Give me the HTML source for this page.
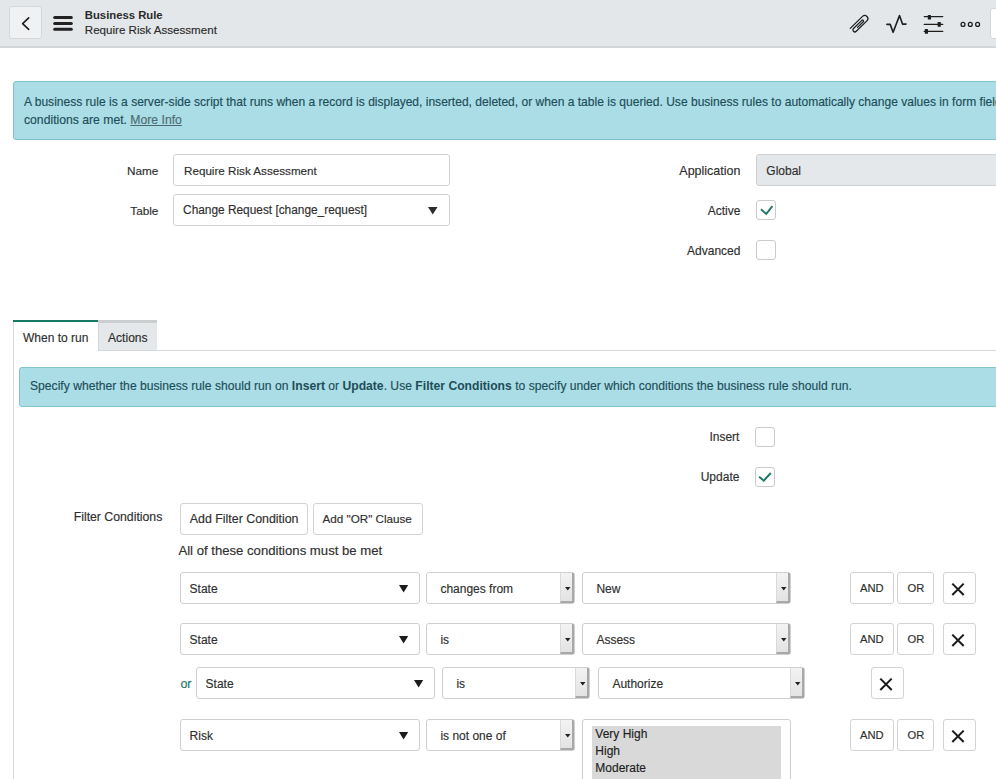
<!DOCTYPE html>
<html><head><meta charset="utf-8">
<style>
*{box-sizing:border-box;margin:0;padding:0}
html,body{width:996px;height:779px;overflow:hidden;background:#fff;font-family:"Liberation Sans",sans-serif;color:#2e2e2e}
body{position:relative}
.abs{position:absolute}
#hdr{position:absolute;left:0;top:0;width:996px;height:48px;background:#e4e7ea;border-bottom:2px solid #d3d6d9}
#back{position:absolute;left:9px;top:6px;width:33px;height:33px;border:1px solid #d5d8db;border-radius:3px;background:#eff1f3}
.t{position:absolute;white-space:nowrap;line-height:1;-webkit-text-stroke:0.15px currentColor}
b{-webkit-text-stroke:0}
.info{position:absolute;background:#aadde6;border:1px solid #7fc3cf;border-radius:3px}
.inp{position:absolute;height:32px;border:1px solid #cfd2d4;border-radius:3px;background:#fff}
.cb{position:absolute;width:20px;height:20px;border:1px solid #cbcbcb;border-radius:3px;background:#fff}
.btn{position:absolute;height:32px;border:1px solid #d3d3d3;border-radius:3px;background:#fff}
.sel{position:absolute;height:32px;border:1px solid #cfcfcf;border-radius:3px;background:#fff}
.dd{position:absolute;right:0;top:0;width:14px;height:30px;background:linear-gradient(#f3f3f3,#e3e3e3);border-left:1px solid #dadada;border-right:2px solid #a8a8a8;border-bottom:2px solid #a8a8a8}
</style></head><body>
<div id="hdr"></div>
<div id="back"></div>
<svg class="abs" style="left:0;top:0" width="996" height="46">
<path d="M28.7 17.8 L22.6 23.6 L28.7 29.4" fill="none" stroke="#1e1e1e" stroke-width="1.6" stroke-linecap="round" stroke-linejoin="round"/>
<rect x="53.2" y="15.9" width="19.6" height="3" rx="1.5" fill="#222"/>
<rect x="53.2" y="22.1" width="19.6" height="3" rx="1.5" fill="#222"/>
<rect x="53.2" y="27.8" width="19.6" height="3" rx="1.5" fill="#222"/>
</svg>
<div class="t" style="top:9.73px;font-size:11.3px;left:84.80px;color:#2b2b2b;font-weight:bold;-webkit-text-stroke:0;">Business Rule</div>
<div class="t" style="top:23.58px;font-size:11.6px;left:84.80px;color:#2b2b2b;">Require Risk Assessment</div>
<div class="info" style="left:13px;top:81px;width:1000px;height:59px"></div>
<div class="t" style="top:96.09px;font-size:12.06px;left:24.00px;color:#1e4d58;">A business rule is a server-side script that runs when a record is displayed, inserted, deleted, or when a table is queried. Use business rules to automatically change values in form fields when specified</div>
<div class="t" style="top:113.87px;font-size:12.2px;left:24.00px;color:#1e4d58;">conditions are met. <span style="color:#4f6b72;text-decoration:underline">More Info</span></div>
<div class="t" style="top:164.94px;font-size:11.77px;right:837.60px;">Name</div>
<div class="inp" style="left:173px;top:154px;width:277px"></div>
<div class="t" style="top:165.02px;font-size:11.67px;left:184.00px;">Require Risk Assessment</div>
<div class="t" style="top:204.94px;font-size:11.77px;right:837.60px;">Table</div>
<div class="inp" style="left:173px;top:194px;width:277px"></div>
<div class="t" style="top:204.86px;font-size:11.86px;left:183.10px;">Change Request [change_request]</div>
<svg class="abs" style="left:428px;top:207px" width="10" height="8"><path d="M0 0 H9.5 L4.75 7.5 Z" fill="#2b2b2b"/></svg>
<div class="t" style="top:165.03px;font-size:12.49px;right:255.60px;">Application</div>
<div class="inp" style="left:756px;top:154px;width:260px;background:#e5e8ea;border-color:#cdd0d3"></div>
<div class="t" style="top:164.74px;font-size:12px;left:766.30px;">Global</div>
<div class="t" style="top:204.74px;font-size:12px;right:255.60px;">Active</div>
<div class="cb" style="left:756px;top:200px"></div>
<svg class="abs" style="left:756px;top:200px" width="20" height="20"><path d="M5 9.3 L10.3 13.9 L16.4 6.2" fill="none" stroke="#1d7867" stroke-width="1.9"/></svg>
<div class="t" style="top:244.74px;font-size:12px;right:255.60px;">Advanced</div>
<div class="cb" style="left:756px;top:240px"></div>
<div class="abs" style="left:98px;top:350px;width:900px;height:1px;background:#d6d8da"></div>
<div class="abs" style="left:13px;top:320px;width:1px;height:460px;background:#d9d9d9"></div>
<div class="abs" style="left:98px;top:320px;width:59px;height:31px;background:#e5e8ea;border-top:3px solid #cbcdcf;border-left:1px solid #d3d5d7;border-bottom:1px solid #d6d8da"></div>
<div class="abs" style="left:13px;top:320px;width:85px;height:2px;background:#1b7a67"></div>
<div class="t" style="top:332.03px;font-size:12.01px;left:23.00px;">When to run</div>
<div class="t" style="top:331.77px;font-size:12.08px;left:108.00px;">Actions</div>
<div class="info" style="left:19px;top:367px;width:1000px;height:40px"></div>
<div class="t" style="top:380.42px;font-size:12.15px;left:30.00px;color:#1e4d58;">Specify whether the business rule should run on <b>Insert</b> or <b>Update</b>. Use <b>Filter Conditions</b> to specify under which conditions the business rule should run.</div>
<div class="t" style="top:431.14px;font-size:12px;right:256.60px;">Insert</div>
<div class="cb" style="left:755px;top:427px"></div>
<div class="t" style="top:470.54px;font-size:12px;right:256.60px;">Update</div>
<div class="cb" style="left:755px;top:467px"></div>
<svg class="abs" style="left:755px;top:467px" width="20" height="20"><path d="M4.1 9.7 L8.8 13.7 L15.8 6" fill="none" stroke="#1d7867" stroke-width="1.9"/></svg>
<div class="t" style="top:511.30px;font-size:12.28px;left:73.70px;">Filter Conditions</div>
<div class="btn" style="left:180px;top:503px;width:128px"></div>
<div class="t" style="top:513.22px;font-size:12.38px;left:189.80px;">Add Filter Condition</div>
<div class="btn" style="left:313px;top:503px;width:110px"></div>
<div class="t" style="top:512.73px;font-size:11.66px;left:322.60px;">Add "OR" Clause</div>
<div class="t" style="top:544.47px;font-size:13.15px;left:178.40px;">All of these conditions must be met</div>
<div class="sel" style="left:180px;top:572px;width:240px"></div>
<div class="t" style="top:582.54px;font-size:12px;left:189.60px;">State</div>
<svg class="abs" style="left:398.7px;top:585px" width="10" height="8"><path d="M0 0 H9.2 L4.6 7.5 Z" fill="#1c1c1c"/></svg>
<div class="sel" style="left:426px;top:572px;width:149px"><div class="dd"></div></div>
<div class="t" style="top:582.54px;font-size:12px;left:440.40px;">changes from</div>
<svg class="abs" style="left:564.5px;top:587px" width="6" height="4"><path d="M0 0 H5.5 L2.75 3.5 Z" fill="#222"/></svg>
<div class="sel" style="left:582px;top:572px;width:209px"><div class="dd"></div></div>
<div class="t" style="top:582.54px;font-size:12px;left:596.40px;">New</div>
<svg class="abs" style="left:780.5px;top:587px" width="6" height="4"><path d="M0 0 H5.5 L2.75 3.5 Z" fill="#222"/></svg>
<div class="btn" style="left:850px;top:572px;width:44px"></div>
<div class="t" style="top:583.02px;font-size:11.2px;left:860.00px;">AND</div>
<div class="btn" style="left:897px;top:572px;width:37px"></div>
<div class="t" style="top:583.02px;font-size:11.2px;left:907.50px;">OR</div>
<div class="btn" style="left:943px;top:572px;width:33px"></div>
<svg class="abs" style="left:943px;top:572px" width="33" height="32"><path d="M9.3 11.6 L20.7 23 M20.7 11.6 L9.3 23" stroke="#1a1a1a" stroke-width="2"/></svg>
<div class="sel" style="left:180px;top:623px;width:240px"></div>
<div class="t" style="top:633.54px;font-size:12px;left:189.60px;">State</div>
<svg class="abs" style="left:398.7px;top:636px" width="10" height="8"><path d="M0 0 H9.2 L4.6 7.5 Z" fill="#1c1c1c"/></svg>
<div class="sel" style="left:426px;top:623px;width:149px"><div class="dd"></div></div>
<div class="t" style="top:633.54px;font-size:12px;left:440.40px;">is</div>
<svg class="abs" style="left:564.5px;top:638px" width="6" height="4"><path d="M0 0 H5.5 L2.75 3.5 Z" fill="#222"/></svg>
<div class="sel" style="left:582px;top:623px;width:209px"><div class="dd"></div></div>
<div class="t" style="top:633.54px;font-size:12px;left:596.40px;">Assess</div>
<svg class="abs" style="left:780.5px;top:638px" width="6" height="4"><path d="M0 0 H5.5 L2.75 3.5 Z" fill="#222"/></svg>
<div class="btn" style="left:850px;top:623px;width:44px"></div>
<div class="t" style="top:634.02px;font-size:11.2px;left:860.00px;">AND</div>
<div class="btn" style="left:897px;top:623px;width:37px"></div>
<div class="t" style="top:634.02px;font-size:11.2px;left:907.50px;">OR</div>
<div class="btn" style="left:943px;top:623px;width:33px"></div>
<svg class="abs" style="left:943px;top:623px" width="33" height="32"><path d="M9.3 11.6 L20.7 23 M20.7 11.6 L9.3 23" stroke="#1a1a1a" stroke-width="2"/></svg>
<div class="t" style="top:677.80px;font-size:12.4px;left:180.40px;color:#1b7666;">or</div>
<div class="sel" style="left:196px;top:667px;width:239px"></div>
<div class="t" style="top:677.54px;font-size:12px;left:205.60px;">State</div>
<svg class="abs" style="left:413.7px;top:680px" width="10" height="8"><path d="M0 0 H9.2 L4.6 7.5 Z" fill="#1c1c1c"/></svg>
<div class="sel" style="left:442px;top:667px;width:148px"><div class="dd"></div></div>
<div class="t" style="top:677.54px;font-size:12px;left:456.40px;">is</div>
<svg class="abs" style="left:579.5px;top:682px" width="6" height="4"><path d="M0 0 H5.5 L2.75 3.5 Z" fill="#222"/></svg>
<div class="sel" style="left:598px;top:667px;width:207px"><div class="dd"></div></div>
<div class="t" style="top:677.54px;font-size:12px;left:612.40px;">Authorize</div>
<svg class="abs" style="left:794.5px;top:682px" width="6" height="4"><path d="M0 0 H5.5 L2.75 3.5 Z" fill="#222"/></svg>
<div class="btn" style="left:871px;top:667px;width:33px"></div>
<svg class="abs" style="left:871px;top:667px" width="33" height="32"><path d="M9.3 11.6 L20.7 23 M20.7 11.6 L9.3 23" stroke="#1a1a1a" stroke-width="2"/></svg>
<div class="sel" style="left:180px;top:719px;width:240px"></div>
<div class="t" style="top:729.54px;font-size:12px;left:189.60px;">Risk</div>
<svg class="abs" style="left:398.7px;top:732px" width="10" height="8"><path d="M0 0 H9.2 L4.6 7.5 Z" fill="#1c1c1c"/></svg>
<div class="sel" style="left:426px;top:719px;width:149px"><div class="dd"></div></div>
<div class="t" style="top:729.54px;font-size:12px;left:440.40px;">is not one of</div>
<svg class="abs" style="left:564.5px;top:734px" width="6" height="4"><path d="M0 0 H5.5 L2.75 3.5 Z" fill="#222"/></svg>
<div class="sel" style="left:582px;top:719px;width:209px;height:80px"></div>
<div class="abs" style="left:592px;top:726px;width:189px;height:60px;background:#d9d9d9"></div>
<div class="t" style="top:727.94px;font-size:12px;left:595.30px;color:#1e1e1e;">Very High</div>
<div class="t" style="top:744.74px;font-size:12px;left:595.30px;color:#1e1e1e;">High</div>
<div class="t" style="top:761.64px;font-size:12px;left:595.30px;color:#1e1e1e;">Moderate</div>
<div class="btn" style="left:850px;top:719px;width:44px"></div>
<div class="t" style="top:730.02px;font-size:11.2px;left:860.00px;">AND</div>
<div class="btn" style="left:897px;top:719px;width:37px"></div>
<div class="t" style="top:730.02px;font-size:11.2px;left:907.50px;">OR</div>
<div class="btn" style="left:943px;top:719px;width:33px"></div>
<svg class="abs" style="left:943px;top:719px" width="33" height="32"><path d="M9.3 11.6 L20.7 23 M20.7 11.6 L9.3 23" stroke="#1a1a1a" stroke-width="2"/></svg>
<svg class="abs" style="left:0;top:0" width="996" height="46">
<path transform="matrix(0.715,-0.699,0.699,0.715,847,12)" d="M-9.1,13.99 L8.0,13.99 A3.145 3.145 0 0 1 8.0,20.28 L-6.88,20.28 A1.97 1.97 0 0 1 -6.88,16.34 L4.8,16.34 A1.025 1.025 0 0 1 4.8,18.39 L-3.25,18.39" fill="none" stroke="#1e1e1e" stroke-width="1.25" stroke-linecap="round"/>
<path d="M886.9 24.4 H890.2 L893.1 32.3 L899.5 15.6 L902.5 24.1 H906" fill="none" stroke="#1e1e1e" stroke-width="1.6" stroke-linejoin="round" stroke-linecap="round"/>
<path d="M924.3 16.6 H942.7 M924.3 24.4 H942.7 M924.3 31.4 H942.7" fill="none" stroke="#1e1e1e" stroke-width="1.4" stroke-linecap="round"/>
<g fill="#1e1e1e">
<rect x="927.8" y="14.9" width="3.2" height="4.6" rx="0.5"/>
<rect x="937.6" y="22.1" width="3.2" height="4.6" rx="0.5"/>
<rect x="924.8" y="29.1" width="3.2" height="4.6" rx="0.5"/>
</g>
<g fill="none" stroke="#1e1e1e" stroke-width="1.25">
<circle cx="963" cy="24.4" r="1.95"/><circle cx="970.3" cy="24.4" r="1.95"/><circle cx="977.6" cy="24.4" r="1.95"/>
</g>
</svg>
<div class="abs" style="left:990px;top:8px;width:20px;height:31px;background:#fff;border:1px solid #d4d7da;border-radius:3px"></div>
</body></html>
